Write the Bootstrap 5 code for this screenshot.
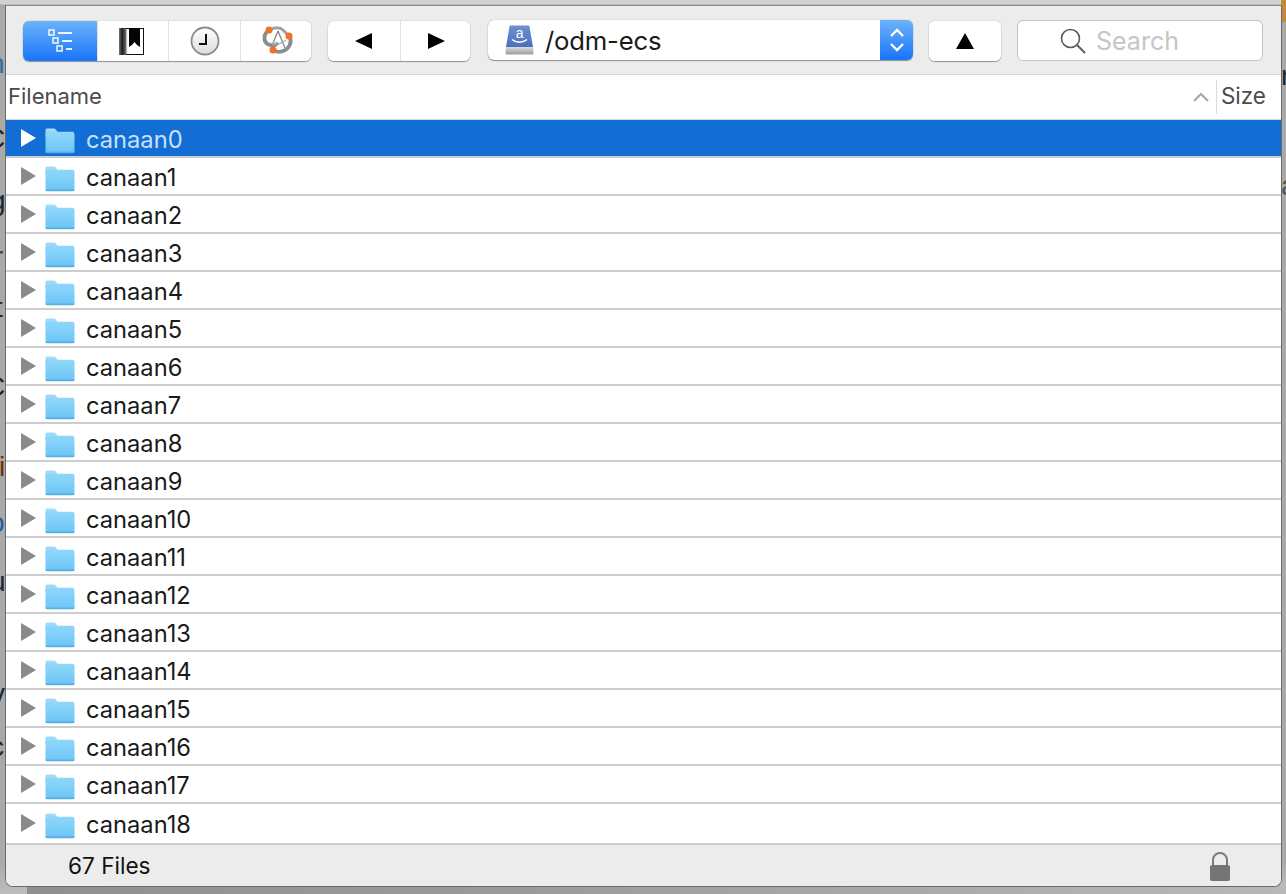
<!DOCTYPE html>
<html lang="en">
<head>
<meta charset="utf-8">
<title>Open file</title>
<link href="https://cdn.jsdelivr.net/npm/bootstrap@5.3.0/dist/css/bootstrap.min.css" rel="stylesheet">
<style>
html,body{height:894px;overflow:hidden}
body{position:relative;background:linear-gradient(#d2d0d2 0,#d2d0d2 4px,#a9a9a9 5px,#a9a9a9 860px,#bdbdbd 894px);font-family:Inter,"Liberation Sans",sans-serif;color:#1a1a1a}
.under{position:absolute;font-size:28px;line-height:1;color:#1d2730;font-family:"Liberation Sans",sans-serif}
.under-top{position:absolute;right:0;top:0;width:5px;height:22px;background:#c58a35}
.under-shade{position:absolute;left:27px;right:0;bottom:0;height:7px;background:linear-gradient(90deg,#8f8f8f,#9b9b9b 40%,#b8b8b8)}
.win{position:relative;margin:5px 0 0 5px;width:1277px;height:882px;background:#fff;border:1px solid #6b6b6b;border-top-color:#8a8a8a;border-radius:0 0 8px 8px;overflow:hidden;z-index:1}
.tbar{height:69px;padding:15px 18px 0 17px;background:#ececec;border-bottom:1px solid #d6d6d6;gap:16px;align-items:flex-start}
.seg{height:40px;background:#fff;border-radius:6px;box-shadow:0 1px 1px rgba(0,0,0,.36),0 0 1px rgba(0,0,0,.45);overflow:hidden}
.seg .btn{height:40px;padding:0;border:0;border-radius:0;border-left:1px solid #e2e2e2;background:#fff;display:flex;align-items:center;justify-content:center}
.seg .btn:first-child{border-left:0}
.seg.btn-group>.btn:not(:first-child){margin-left:0}
.seg .btn.active{background:linear-gradient(#6cb2fb,#1874f9)}
.w-view{width:288px}
.w-view .btn:nth-child(1){flex:0 0 74px}
.w-view .btn:nth-child(2){flex:0 0 71px;padding-right:3px}
.w-view .btn:nth-child(3){flex:0 0 72px;padding-left:1px}
.w-view .btn:nth-child(4){flex:0 0 71px;padding-left:3px}
.w-nav{width:142px;margin-left:1px}.w-nav .btn:nth-child(1){flex:0 0 72px}.w-nav .btn:nth-child(2){flex:0 0 70px}
.w-up{width:72px}.w-up .btn{flex:0 0 72px}
.pathbox{position:relative;width:425px;height:40px;margin-top:-1px;margin-left:2px;background:#fff;border-radius:6px;box-shadow:0 1px 1px rgba(0,0,0,.36),0 0 1px rgba(0,0,0,.45);overflow:hidden;padding-left:17px;gap:11px;font-size:25.7px;line-height:40px;letter-spacing:-.2px}
.pathtext{margin-top:2px}
.stepper{position:absolute;right:0;top:0;bottom:0;width:33px;background:linear-gradient(#6cb2fb,#1874f9)}
.srch{width:246px;height:41px;margin-top:-1px;background:#fff;border:1px solid #c4c4c4;border-radius:6px;padding-left:42px;gap:10px;font-size:25px;color:#c6c6c6}
.srch span{margin-top:2px}
.thead{height:45px;border-bottom:1px solid #d6d6d6;font-size:22px;color:#4b4b4b;padding-left:2px;padding-right:15px}
.thead .flex-grow-1{margin-bottom:2px}
.thead .sz{border-left:1px solid #dcdcdc;height:34px;line-height:32px;padding-left:4px;margin-left:7px;font-size:22.5px}
.flist{height:725px;overflow:hidden;border-bottom:2px solid #cdcdcd}
.flist .list-group-item{height:38px;padding:0 0 0 15px;border:0;border-bottom:2px solid #cdcdcd;border-radius:0;background:#fff;color:#1a1a1a;font-size:23.7px;line-height:36px;gap:8px;display:flex;align-items:center}
.flist .list-group-item.active{background:#126dd5;color:#c9e0f8}
.tw{flex:0 0 15px;height:18px}
.fld{flex:0 0 32px;height:26px;margin-top:5px}
.fname{margin-left:2px;margin-top:3px}
.sbar{height:41px;background:#ececec;font-size:22.6px;color:#111;padding:0 50px 0 62px}
.sbar svg{margin-top:2px}
</style>
</head>
<body>
<span class="under-top"></span>
<span class="under-shade"></span>
<span class="under" style="left:-11px;top:50px;color:#2f6f9f">n</span>
<span class="under" style="left:-15px;top:125px">C</span>
<span class="under" style="left:-10px;top:187px">g</span>
<span class="under" style="left:-6px;top:243px;color:#6d2d10">r</span>
<span class="under" style="left:-5px;top:294px">t</span>
<span class="under" style="left:-15px;top:373px">C</span>
<span class="under" style="left:-1px;top:453px;color:#6d2d10">i</span>
<span class="under" style="left:-11px;top:509px;color:#1e5f9f">o</span>
<span class="under" style="left:-10px;top:568px">u</span>
<span class="under" style="left:-9px;top:680px">v</span>
<span class="under" style="left:-10px;top:733px">c</span>
<span class="under" style="left:1281px;top:62px">r</span>
<span class="under" style="left:1281px;top:172px;color:#555">a</span>

<svg width="0" height="0" class="d-block" aria-hidden="true">
<defs>
<linearGradient id="gf" x1="0" y1="0" x2="0" y2="1"><stop offset="0" stop-color="#8bd6fb"/><stop offset="1" stop-color="#6cc5f6"/></linearGradient>
<linearGradient id="gt" x1="0" y1="0" x2="0" y2="1"><stop offset="0" stop-color="#a6dff9"/><stop offset="1" stop-color="#7fcef7"/></linearGradient>
<symbol id="folder" viewBox="0 0 32 26">
<path d="M1.5 5V2.2C1.5 1 2.2.5 3.2.5h6.6c.9 0 1.4.3 1.9 1l1.8 2.3h15c1 0 1.5.6 1.5 1.5V8H1.5z" fill="url(#gt)"/>
<path d="M1.5 5.5h29v18c0 1-.6 1.500-1.500 1.500H3c-1 0-1.500-.5-1.500-1.500z" fill="url(#gf)"/>
<path d="M1.5 23.6h29c0 1-.6 1.600-1.500 1.600H3c-1 0-1.500-.6-1.500-1.600z" fill="#55aedd"/>
</symbol>
<symbol id="tri" viewBox="0 0 15 18"><path d="M0 0l15 9L0 18z"/></symbol>
<linearGradient id="gc" x1="0" y1="0" x2="0" y2="1"><stop offset="0" stop-color="#fff"/><stop offset="1" stop-color="#dcdcdc"/></linearGradient>
<linearGradient id="gb" x1="0" y1="0" x2="1" y2="0"><stop offset="0" stop-color="#777"/><stop offset=".45" stop-color="#1c1c1c"/><stop offset="1" stop-color="#6a6a6a"/></linearGradient>
<linearGradient id="gd" x1="0" y1="0" x2="0" y2="1"><stop offset="0" stop-color="#6f90d2"/><stop offset="1" stop-color="#4a70bd"/></linearGradient>
<linearGradient id="gs" x1="0" y1="0" x2="0" y2="1"><stop offset="0" stop-color="#dcdcdc"/><stop offset="1" stop-color="#9b9b9b"/></linearGradient>
</defs>
</svg>

<main class="win d-flex flex-column">
<div class="tbar d-flex">
<div class="seg w-view btn-group" role="group">
<button class="btn active" type="button" aria-label="List view">
<svg width="24" height="24" viewBox="0 0 24 24" fill="none" stroke="#eaf3ff" stroke-width="1.600"><rect x="1" y="1" width="5" height="5"/><rect x="5" y="9" width="5" height="5"/><rect x="9" y="17" width="5" height="5"/><path d="M10 4h14M14 12h10M18 20h6" stroke-width="2"/></svg>
</button>
<button class="btn" type="button" aria-label="Bookmarks">
<svg width="25" height="27" viewBox="0 0 25 27"><rect width="25" height="27" fill="#111"/><rect width="7" height="27" fill="url(#gb)"/><rect x="7" y="1" width="17" height="25" fill="#fff"/><path d="M10 0h11v19l-3-2-2.500-3-2.500 3-3 2z" fill="#050505"/><rect x="7" y="1" width="1.200" height="25" fill="#bbb"/></svg>
</button>
<button class="btn" type="button" aria-label="History">
<svg width="30" height="30" viewBox="0 0 30 30"><circle cx="15" cy="15" r="13.500" fill="url(#gc)" stroke="#8b8b8b" stroke-width="1.800"/><path d="M16 8v10H9" fill="none" stroke="#111" stroke-width="2"/></svg>
</button>
<button class="btn" type="button" aria-label="Network">
<svg width="32" height="30" viewBox="0 0 32 30" fill="none"><path d="M6 5C1 9 1 17 8 19c3 1 6 0 8-2" stroke="#8c8c8c" stroke-width="3.800"/><path d="M8 4c4-3 10-3 13 0 2 2 3 4 6 5" stroke="#a0a0a0" stroke-width="3"/><path d="M28 11c2 6-1 12-7 14-3 1-7 1-9-1" stroke="#8c8c8c" stroke-width="3.800"/><path d="M16 5L9 22M16 5l7 17" stroke="#8f8f8f" stroke-width="1.400"/><path d="M8 17c5 2 11 1 16-3" stroke="#b0b0b0" stroke-width="1.200"/><circle cx="7" cy="4" r="3.500" fill="#f0702c"/><circle cx="27" cy="10" r="3.500" fill="#f0702c"/><circle cx="11" cy="24" r="3.500" fill="#f0702c"/></svg>
</button>
</div>

<div class="seg w-nav btn-group" role="group">
<button class="btn" type="button" aria-label="Back"><svg width="18" height="18" viewBox="0 0 18 18"><path d="M17 1v16L0 9z" fill="#000"/></svg></button>
<button class="btn" type="button" aria-label="Forward"><svg width="18" height="18" viewBox="0 0 18 18"><path d="M1 1v16l17-8z" fill="#000"/></svg></button>
</div>

<div class="pathbox d-flex align-items-center">
<svg width="29" height="30" viewBox="0 0 29 30" class="flex-shrink-0"><path d="M6 .5h17c1 0 1.500.5 1.600 1.500L28 22H1L4.400 2C4.500 1 5 .5 6 .5z" fill="url(#gd)"/><path d="M1 22h27l.5 6c0 1-.6 1.500-1.500 1.500H2C1 29.500.5 29 .5 28z" fill="url(#gs)"/><text x="14.500" y="12.500" font-family="Liberation Sans,sans-serif" font-size="14" fill="#fff" text-anchor="middle">a</text><path d="M7 14.500c4 3.500 11 3.500 15 0" fill="none" stroke="#fff" stroke-width="1.500"/></svg>
<span class="pathtext">/odm-ecs</span>
<span class="stepper d-flex align-items-center justify-content-center"><svg width="16" height="26" viewBox="0 0 16 26" fill="none" stroke="#fff" stroke-width="2.400"><path d="M2 9l6-6 6 6M2 17l6 6 6-6"/></svg></span>
</div>

<div class="seg w-up btn-group" role="group">
<button class="btn" type="button" aria-label="Up"><svg width="18" height="18" viewBox="0 0 18 18"><path d="M9 1l9 16H0z" fill="#000"/></svg></button>
</div>

<div class="srch d-flex align-items-center">
<svg width="26" height="26" viewBox="0 0 26 26" fill="none" stroke="#5c5c5c" class="flex-shrink-0"><circle cx="10.500" cy="10.500" r="9" stroke-width="1.600"/><path d="M17 17l8 8" stroke-width="2"/></svg>
<span>Search</span>
</div>
</div>

<div class="thead d-flex align-items-center">
<span class="flex-grow-1">Filename</span>
<svg width="16" height="10" viewBox="0 0 16 10" fill="none" stroke="#a5a5a5" stroke-width="2"><path d="M1 9l7-7 7 7"/></svg>
<span class="sz">Size</span>
</div>

<div class="flist list-group list-group-flush">
<div class="list-group-item active"><svg class="tw" fill="#fff"><use href="#tri"/></svg><svg class="fld"><use href="#folder"/></svg><span class="fname">canaan0</span></div>
<div class="list-group-item"><svg class="tw" fill="#8a8a8a"><use href="#tri"/></svg><svg class="fld"><use href="#folder"/></svg><span class="fname">canaan1</span></div>
<div class="list-group-item"><svg class="tw" fill="#8a8a8a"><use href="#tri"/></svg><svg class="fld"><use href="#folder"/></svg><span class="fname">canaan2</span></div>
<div class="list-group-item"><svg class="tw" fill="#8a8a8a"><use href="#tri"/></svg><svg class="fld"><use href="#folder"/></svg><span class="fname">canaan3</span></div>
<div class="list-group-item"><svg class="tw" fill="#8a8a8a"><use href="#tri"/></svg><svg class="fld"><use href="#folder"/></svg><span class="fname">canaan4</span></div>
<div class="list-group-item"><svg class="tw" fill="#8a8a8a"><use href="#tri"/></svg><svg class="fld"><use href="#folder"/></svg><span class="fname">canaan5</span></div>
<div class="list-group-item"><svg class="tw" fill="#8a8a8a"><use href="#tri"/></svg><svg class="fld"><use href="#folder"/></svg><span class="fname">canaan6</span></div>
<div class="list-group-item"><svg class="tw" fill="#8a8a8a"><use href="#tri"/></svg><svg class="fld"><use href="#folder"/></svg><span class="fname">canaan7</span></div>
<div class="list-group-item"><svg class="tw" fill="#8a8a8a"><use href="#tri"/></svg><svg class="fld"><use href="#folder"/></svg><span class="fname">canaan8</span></div>
<div class="list-group-item"><svg class="tw" fill="#8a8a8a"><use href="#tri"/></svg><svg class="fld"><use href="#folder"/></svg><span class="fname">canaan9</span></div>
<div class="list-group-item"><svg class="tw" fill="#8a8a8a"><use href="#tri"/></svg><svg class="fld"><use href="#folder"/></svg><span class="fname">canaan10</span></div>
<div class="list-group-item"><svg class="tw" fill="#8a8a8a"><use href="#tri"/></svg><svg class="fld"><use href="#folder"/></svg><span class="fname">canaan11</span></div>
<div class="list-group-item"><svg class="tw" fill="#8a8a8a"><use href="#tri"/></svg><svg class="fld"><use href="#folder"/></svg><span class="fname">canaan12</span></div>
<div class="list-group-item"><svg class="tw" fill="#8a8a8a"><use href="#tri"/></svg><svg class="fld"><use href="#folder"/></svg><span class="fname">canaan13</span></div>
<div class="list-group-item"><svg class="tw" fill="#8a8a8a"><use href="#tri"/></svg><svg class="fld"><use href="#folder"/></svg><span class="fname">canaan14</span></div>
<div class="list-group-item"><svg class="tw" fill="#8a8a8a"><use href="#tri"/></svg><svg class="fld"><use href="#folder"/></svg><span class="fname">canaan15</span></div>
<div class="list-group-item"><svg class="tw" fill="#8a8a8a"><use href="#tri"/></svg><svg class="fld"><use href="#folder"/></svg><span class="fname">canaan16</span></div>
<div class="list-group-item"><svg class="tw" fill="#8a8a8a"><use href="#tri"/></svg><svg class="fld"><use href="#folder"/></svg><span class="fname">canaan17</span></div>
<div class="list-group-item"><svg class="tw" fill="#8a8a8a"><use href="#tri"/></svg><svg class="fld"><use href="#folder"/></svg><span class="fname">canaan18</span></div>
</div>

<div class="sbar d-flex align-items-center justify-content-between">
<span>67 Files</span>
<svg width="22" height="29" viewBox="0 0 22 29"><path d="M4 14V8a7 7 0 0 1 14 0v6" fill="none" stroke="#7a7a7a" stroke-width="2"/><rect x="1" y="13" width="20" height="16" rx="2" fill="#757575"/></svg>
</div>
</main>
<script src="https://cdn.jsdelivr.net/npm/bootstrap@5.3.0/dist/js/bootstrap.bundle.min.js"></script>
</body>
</html>
